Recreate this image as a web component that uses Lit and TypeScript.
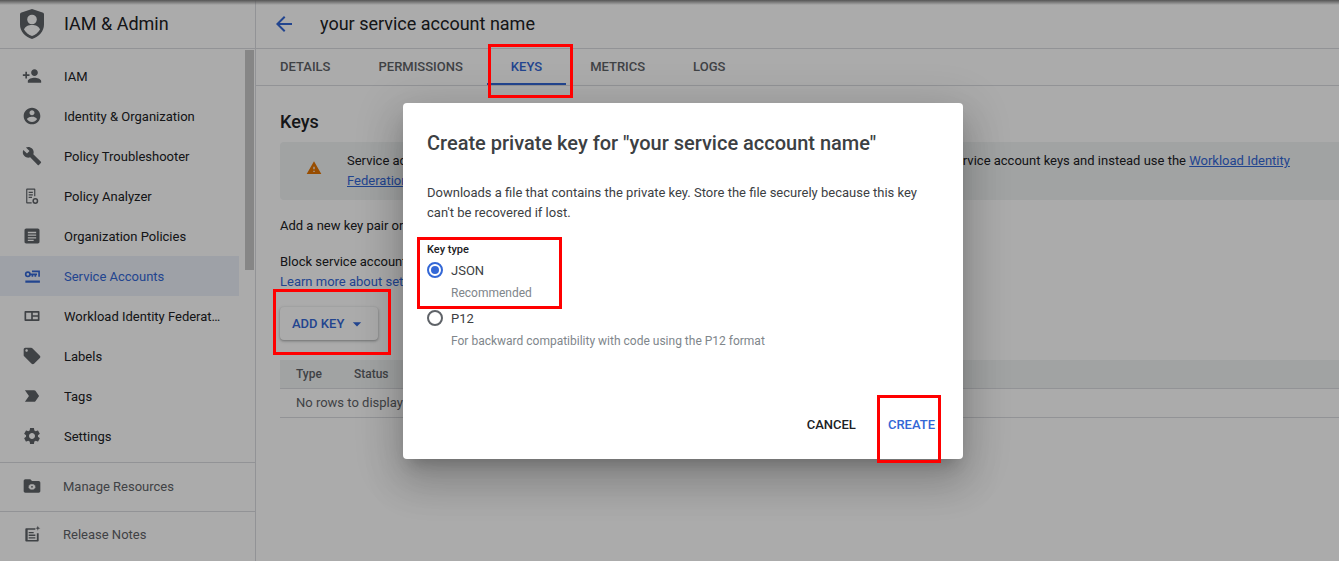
import { LitElement, html, css, svg } from "lit";
import { customElement } from "lit/decorators.js";

const ic = (d: unknown, size = 20) => html`<svg width=${size} height=${size} viewBox="0 0 24 24" fill="currentColor">${d}</svg>`;
const p = (d: string) => svg`<path d=${d}></path>`;

const I = {
  personAdd: p("M15 12c2.21 0 4-1.79 4-4s-1.79-4-4-4-4 1.79-4 4 1.79 4 4 4zm-9-2V7H4v3H1v2h3v3h2v-3h3v-2H6zm9 4c-2.67 0-8 1.34-8 4v2h16v-2c0-2.66-5.33-4-8-4z"),
  account: p("M12 2C6.48 2 2 6.48 2 12s4.48 10 10 10 10-4.48 10-10S17.52 2 12 2zm0 3c1.66 0 3 1.34 3 3s-1.34 3-3 3-3-1.34-3-3 1.34-3 3-3zm0 14.2c-2.5 0-4.71-1.28-6-3.22.03-1.99 4-3.08 6-3.08 1.99 0 5.97 1.09 6 3.08-1.29 1.94-3.5 3.22-6 3.22z"),
  build: p("M22.7 19l-9.1-9.1c.9-2.3.4-5-1.5-6.9-2-2-5-2.4-7.4-1.3L9 6 6 9 1.6 4.7C.4 7.1.9 10.1 2.9 12.1c1.9 1.9 4.6 2.4 6.9 1.5l9.1 9.1c.4.4 1 .4 1.4 0l2.3-2.3c.5-.4.5-1.1.1-1.4z"),
  analyzer: svg`<path d="M6 3h9c.6 0 1 .4 1 1v8.2h-1.4V4.4H6.4v15.2h5.2V21H6c-.6 0-1-.4-1-1V4c0-.6.4-1 1-1z"></path><path d="M8 7h5v1.4H8zM8 10h5v1.4H8zM8 13h4v1.4H8z"></path><circle cx="16" cy="18" r="2.6" fill="none" stroke="currentColor" stroke-width="1.8"></circle>`,
  article: p("M19 3H5c-1.1 0-2 .9-2 2v14c0 1.1.9 2 2 2h14c1.1 0 2-.9 2-2V5c0-1.1-.9-2-2-2zM7 7h10v1.6H7zm0 3.2h10v1.6H7zm0 3.2h10V15H7zm0 3h7V18H7z"),
  service: svg`<circle cx="7" cy="10" r="2.6" fill="none" stroke="currentColor" stroke-width="2"></circle><path d="M9.500 9H18v2h-1v2h-2v-2h-1.500v2h-2v-2h-2zM12 5.500h9.500V13h-2V7.500H12zM4 17.500h17.500V20H4z"></path>`,
  workload: svg`<path fill-rule="evenodd" d="M4 6h16c.6 0 1 .4 1 1v10c0 .6-.4 1-1 1H4c-.6 0-1-.4-1-1V7c0-.6.4-1 1-1zM5 8v8h6V8zM13 8v3h6V8zM13 13v3h6v-3z"></path>`,
  label: p("M21.41 11.58l-9-9C12.05 2.22 11.55 2 11 2H4c-1.1 0-2 .9-2 2v7c0 .55.22 1.05.59 1.42l9 9c.36.36.86.58 1.41.58.55 0 1.05-.22 1.41-.59l7-7c.37-.36.59-.86.59-1.41 0-.55-.23-1.06-.59-1.42zM5.5 7C4.67 7 4 6.33 4 5.5S4.67 4 5.5 4 7 4.67 7 5.5 6.33 7 5.5 7z"),
  tag: p("M3.5 18.99l11 .01c.67 0 1.27-.33 1.63-.84L20.5 12l-4.37-6.16c-.36-.51-.96-.84-1.63-.84l-11 .01L8.34 12 3.5 18.99z"),
  settings: p("M19.14 12.94c.04-.3.06-.61.06-.94 0-.32-.02-.64-.07-.94l2.03-1.58c.18-.14.23-.41.12-.61l-1.92-3.32c-.12-.22-.37-.29-.59-.22l-2.39.96c-.5-.38-1.03-.7-1.62-.94l-.36-2.54c-.04-.24-.24-.41-.48-.41h-3.84c-.24 0-.43.17-.47.41l-.36 2.54c-.59.24-1.13.57-1.62.94l-2.39-.96c-.22-.08-.47 0-.59.22L2.74 8.87c-.12.21-.08.47.12.61l2.03 1.58c-.05.3-.09.63-.09.94s.02.64.07.94l-2.03 1.58c-.18.14-.23.41-.12.61l1.92 3.32c.12.22.37.29.59.22l2.39-.96c.5.38 1.03.7 1.62.94l.36 2.54c.05.24.24.41.48.41h3.84c.24 0 .44-.17.47-.41l.36-2.54c.59-.24 1.13-.56 1.62-.94l2.39.96c.22.08.47 0 .59-.22l1.92-3.32c.12-.22.07-.47-.12-.61l-2.01-1.58zM12 15.6c-1.98 0-3.6-1.62-3.6-3.6s1.62-3.6 3.6-3.6 3.6 1.62 3.6 3.6-1.62 3.6-3.6 3.6z"),
  folder: svg`<path fill-rule="evenodd" d="M20 6h-8l-2-2H4c-1.1 0-1.99.9-1.99 2L2 18c0 1.1.9 2 2 2h16c1.1 0 2-.9 2-2V8c0-1.1-.9-2-2-2zM12 9.200l1 .9 1.400-.3.5 1.300 1.300.6-.4 1.300.4 1.300-1.300.6-.5 1.300-1.400-.3-1 .9-1-.9-1.400.3-.5-1.300-1.300-.6.4-1.300-.4-1.300 1.300-.6.5-1.300 1.400.3zM12 11.900a1.100 1.100 0 1 0 0 2.200 1.100 1.100 0 0 0 0-2.200z"></path>`,
  notes: svg`<path d="M5 5h11v2H6.800v12.200h11V11H20v9c0 .6-.4 1-1 1H5c-.6 0-1-.4-1-1V6c0-.6.4-1 1-1z"></path><path d="M8 9.500h6v1.600H8zM8 12.700h8v1.600H8zM8 15.900h8v1.600H8z"></path><path d="M19 2l.8 2.200L22 5l-2.200.8L19 8l-.8-2.200L16 5l2.200-.8z"></path>`,
  warning: p("M1 21h22L12 2 1 21zm12-3h-2v-2h2v2zm0-4h-2v-4h2v4z"),
  back: p("M20 11H7.830l5.590-5.590L12 4l-8 8 8 8 1.410-1.410L7.830 13H20v-2z"),
  drop: p("M7 10l5 5 5-5z"),
};

const navItems: [unknown, string, boolean?][] = [
  [I.personAdd, "IAM"],
  [I.account, "Identity & Organization"],
  [I.build, "Policy Troubleshooter"],
  [I.analyzer, "Policy Analyzer"],
  [I.article, "Organization Policies"],
  [I.service, "Service Accounts", true],
  [I.workload, "Workload Identity Federation"],
  [I.label, "Labels"],
  [I.tag, "Tags"],
  [I.settings, "Settings"],
];

const tabs = ["DETAILS", "PERMISSIONS", "KEYS", "METRICS", "LOGS"];

@customElement("app-root")
export class AppRoot extends LitElement {
  static styles = css`
    :host {
      display: block;
      position: relative;
      width: 1339px;
      height: 561px;
      overflow: hidden;
      background: #fff;
      font-family: Roboto, "Liberation Sans", sans-serif;
      color: #202124;
      font-size: 13px;
    }
    .page { display: flex; height: 561px; }
    .side {
      width: 255px;
      flex: none;
      border-right: 1px solid #dadce0;
      display: flex;
      flex-direction: column;
      height: 561px;
    }
    .brand {
      height: 49px;
      flex: none;
      box-sizing: border-box;
      border-bottom: 1px solid #dadce0;
      display: flex;
      align-items: center;
      padding: 0 0 1px 20px;
      gap: 20px;
      font-size: 18px;
      color: #202124;
    }
    .navwrap { display: flex; height: 413px; flex: none; }
    .nav { width: 239px; flex: none; padding-top: 7px; }
    .track { width: 16px; padding: 1px 1px 0 6px; box-sizing: border-box; }
    .thumb { height: 220px; background: #c8c8c8; }
    .row {
      height: 40px;
      display: flex;
      align-items: center;
      padding-left: 22px;
      gap: 22px;
      color: #202124;
    }
    .row svg { color: #5f6368; flex: none; }
    .row .t { white-space: nowrap; overflow: hidden; text-overflow: ellipsis; width: 157px; }
    .row.on { background: #ecf0fa; color: #3367d6; }
    .row.on svg { color: #3367d6; }
    .row.sub {
      border-top: 1px solid #dadce0;
      color: #5f6368;
      height: 49px;
      flex: none;
      box-sizing: border-box;
      padding-bottom: 2px;
    }
    .row.sub.last { padding-bottom: 5px; height: 50px; }
    .row.sub .t { margin-left: -1px; }
    .main { flex: 1; min-width: 0; }
    .head {
      height: 49px;
      box-sizing: border-box;
      border-bottom: 1px solid #dadce0;
      display: flex;
      align-items: center;
      padding: 0 0 1px 16px;
      gap: 24px;
      font-size: 18px;
    }
    .head svg { color: #3367d6; flex: none; }
    .tabs {
      display: flex;
      height: 37px;
      box-sizing: border-box;
      border-bottom: 1px solid #dadce0;
    }
    .tab {
      padding: 0 24px;
      line-height: 35px;
      height: 36px;
      box-sizing: border-box;
      font-size: 13px;
      font-weight: 500;
      color: #5f6368;
    }
    .tab.on { color: #3367d6; border-bottom: 2px solid #3367d6; }
    .body { padding: 0 0 0 24px; }
    h2 { margin: 0; font-size: 18px; font-weight: 500; line-height: 24px; padding-top: 24px; }
    .alert {
      margin-top: 8px;
      height: 58px;
      background: #f1f3f4;
      border-radius: 4px 0 0 4px;
      display: flex;
      align-items: center;
      padding-left: 26px;
      gap: 25px;
      white-space: nowrap;
      line-height: 20px;
    }
    .alert svg { color: #e37400; flex: none; margin-bottom: 6px; }
    a { color: #3367d6; text-decoration: underline; }
    .para { line-height: 20px; white-space: nowrap; }
    .add { margin-top: 16px; }
    .block { margin-top: 16px; }
    .plain { text-decoration: none; }
    .btn {
      margin-top: 15px;
      width: 98px;
      height: 33px;
      border-radius: 4px;
      background: #fff;
      box-shadow: 0 1px 2px rgba(60,64,67,.3), 0 1px 3px 1px rgba(60,64,67,.15);
      display: flex;
      align-items: center;
      padding-left: 12px;
      gap: 3px;
      box-sizing: border-box;
      color: #3367d6;
      font-weight: 500;
      font-size: 13px;
    }
    .btn svg { flex: none; }
    .th {
      margin-top: 20px;
      height: 29px;
      box-sizing: border-box;
      background: #f1f3f4;
      border-bottom: 1px solid #dadce0;
      display: flex;
      align-items: center;
      padding-left: 16px;
      gap: 32px;
      color: #5f6368;
      font-weight: 500;
      font-size: 12px;
    }
    .td {
      height: 29px;
      box-sizing: border-box;
      border-bottom: 1px solid #dadce0;
      display: flex;
      align-items: center;
      padding: 0 0 2px 16px;
      color: #5f6368;
    }
    .scrim {
      position: absolute;
      inset: 0;
      background: rgba(0,0,0,.33);
    }
    .topshade {
      position: absolute;
      left: 0; right: 0; top: 0;
      height: 5px;
      background: linear-gradient(#555, rgba(85,85,85,0));
    }
    .modal {
      position: absolute;
      left: 403px;
      top: 103px;
      width: 560px;
      height: 356px;
      box-sizing: border-box;
      background: #fff;
      border-radius: 4px;
      padding: 24px;
      display: flex;
      flex-direction: column;
      box-shadow: 0 11px 15px -7px rgba(0,0,0,.2), 0 24px 38px 3px rgba(0,0,0,.14), 0 9px 46px 8px rgba(0,0,0,.12);
    }
    .modal h3 { margin: 0; font-size: 20px; font-weight: 500; line-height: 32px; color: #3c4043; }
    .modal p { margin: 24px 0 0; line-height: 20px; color: #3c4043; }
    .kt { margin-top: 20px; font-size: 11px; font-weight: 500; line-height: 14px; }
    .opt { display: flex; align-items: center; gap: 8px; height: 24px; margin-top: 1px; font-size: 13px; color: #3c4043; }
    .radio { width: 16px; height: 16px; box-sizing: border-box; border: 2px solid #5f6368; border-radius: 50%; display: flex; align-items: center; justify-content: center; flex: none; }
    .radio.on { border-color: #3367d6; }
    .radio.on i { display: block; width: 8px; height: 8px; background: #3367d6; border-radius: 50%; }
    .hint { padding-left: 24px; font-size: 12px; color: #80868b; line-height: 16px; }
    .h1 { margin-top: 3px; }
    .opt2 { margin-top: 5px; }
    .h2 { margin-top: 3px; }
    .acts { margin-top: auto; display: flex; justify-content: flex-end; gap: 32px; font-weight: 500; font-size: 13px; padding: 0 4px 0 0; line-height: 20px; }
    .acts .c { color: #3367d6; }
    .red { position: absolute; border: 3px solid #ff0000; box-sizing: border-box; }
    .r1 { left: 488px; top: 44px; width: 85px; height: 54px; }
    .r2 { left: 273px; top: 289px; width: 118px; height: 66px; }
    .r3 { left: 417px; top: 237px; width: 145px; height: 72px; }
    .r4 { left: 877px; top: 395px; width: 64px; height: 68px; }
  `;

  render() {
    return html`
      <div class="page">
        <aside class="side">
          <div class="brand">
            <svg width="24" height="30" viewBox="0 0 24 30">
              <path fill="#5f6368" d="M12 0l10.500 3.600c1 .3 1.500 1 1.500 2v9.800C24 22 19 27.600 12 30 5 27.600 0 22 0 15.400V5.600c0-1 .5-1.700 1.500-2z"></path>
              <circle cx="12" cy="10.500" r="4.800" fill="#fff"></circle>
              <path fill="#fff" d="M4 20.500c1-3.200 4.500-4.500 8-4.500s7 1.300 8 4.500C18.400 23.500 15.400 25.800 12 27 8.600 25.800 5.600 23.500 4 20.500z"></path>
            </svg>
            <span>IAM &amp; Admin</span>
          </div>
          <div class="navwrap">
            <nav class="nav">
              ${navItems.map(([d, t, on]) => html`
                <div class="row ${on ? "on" : ""}">${ic(d)}<span class="t">${t}</span></div>`)}
            </nav>
            <div class="track"><div class="thumb"></div></div>
          </div>
          <div class="row sub">${ic(I.folder)}<span class="t">Manage Resources</span></div>
          <div class="row sub last">${ic(I.notes)}<span class="t">Release Notes</span></div>
        </aside>
        <main class="main">
          <div class="head">${ic(I.back, 24)}<span>your service account name</span></div>
          <div class="tabs">
            ${tabs.map((t) => html`<div class="tab ${t === "KEYS" ? "on" : ""}">${t}</div>`)}
          </div>
          <div class="body">
            <h2>Keys</h2>
            <div class="alert">
              ${ic(I.warning, 16)}
              <div>
                <div>Service account keys could pose a security risk if compromised. We recommend you avoid downloading service account keys and instead use the <a href="#">Workload Identity</a></div>
                <div><a href="#">Federation</a> and learn more about the best way to authenticate service accounts on Google Cloud <a href="#">here</a>.</div>
              </div>
            </div>
            <div class="para add">Add a new key pair or upload a key certificate from an existing key pair.</div>
            <div class="block">
              <div class="para">Block service account key creation using organization policies.</div>
              <div class="para"><a href="#" class="plain">Learn more about setting organization policies for service accounts</a></div>
            </div>
            <div class="btn"><span>ADD KEY</span>${ic(I.drop, 20)}</div>
            <div class="th"><span>Type</span><span>Status</span></div>
            <div class="td">No rows to display</div>
          </div>
        </main>
      </div>
      <div class="scrim"></div>
      <div class="topshade"></div>
      <div class="modal">
        <h3>Create private key for "your service account name"</h3>
        <p>Downloads a file that contains the private key. Store the file securely because this key can't be recovered if lost.</p>
        <div class="kt">Key type</div>
        <div class="opt"><span class="radio on"><i></i></span>JSON</div>
        <div class="hint h1">Recommended</div>
        <div class="opt opt2"><span class="radio"></span>P12</div>
        <div class="hint h2">For backward compatibility with code using the P12 format</div>
        <div class="acts"><span>CANCEL</span><span class="c">CREATE</span></div>
      </div>
      <div class="red r1"></div>
      <div class="red r2"></div>
      <div class="red r3"></div>
      <div class="red r4"></div>
    `;
  }
}
